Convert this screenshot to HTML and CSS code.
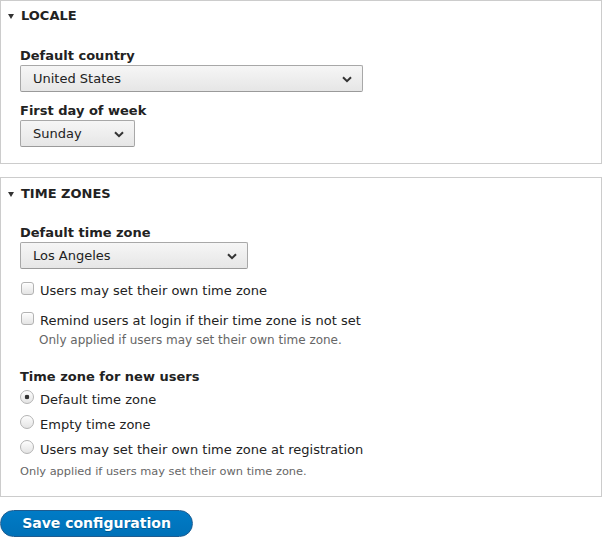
FILE: index.html
```html
<!DOCTYPE html>
<html lang="en">
<head>
<meta charset="utf-8">
<title>Regional settings</title>
<link rel="stylesheet" href="styles.css">
</head>
<body>
<form class="page">
  <section class="box">
    <div class="summary"><span class="marker"></span><span class="summary-text">Locale</span></div>
    <div class="box-body">
      <div class="label">Default country</div>
      <div class="select select--country"><span>United States</span><svg class="chev" width="10" height="7" viewBox="0 0 10 7"><path d="M1 1.2 L5 5.2 L9 1.2" fill="none" stroke="#333" stroke-width="2"/></svg></div>
      <div class="label label--gap">First day of week</div>
      <div class="select select--day"><span>Sunday</span><svg class="chev" width="10" height="7" viewBox="0 0 10 7"><path d="M1 1.2 L5 5.2 L9 1.2" fill="none" stroke="#333" stroke-width="2"/></svg></div>
    </div>
  </section>

  <section class="box box--second">
    <div class="summary summary--low"><span class="marker"></span><span class="summary-text">Time zones</span></div>
    <div class="box-body box-body--tz">
      <div class="label label--tight">Default time zone</div>
      <div class="select select--tz"><span>Los Angeles</span><svg class="chev" width="10" height="7" viewBox="0 0 10 7"><path d="M1 1.2 L5 5.2 L9 1.2" fill="none" stroke="#333" stroke-width="2"/></svg></div>
      <label class="option option--check option--lead"><input type="checkbox" class="check"><span>Users may set their own time zone</span></label>
      <label class="option option--check"><input type="checkbox" class="check"><span>Remind users at login if their time zone is not set</span></label>
      <div class="desc desc--indent">Only applied if users may set their own time zone.</div>
      <div class="label label--group">Time zone for new users</div>
      <label class="option option--radio option--first"><input type="radio" name="tz" class="radio" checked><span>Default time zone</span></label>
      <label class="option option--radio"><input type="radio" name="tz" class="radio"><span>Empty time zone</span></label>
      <label class="option option--radio"><input type="radio" name="tz" class="radio"><span>Users may set their own time zone at registration</span></label>
      <div class="desc desc--small">Only applied if users may set their own time zone.</div>
    </div>
  </section>

  <button type="button" class="button">Save configuration</button>
</form>
</body>
</html>
```

FILE: styles.css
```css
* { box-sizing: border-box; }

html, body {
  margin: 0;
  padding: 0;
  background: #fff;
}

body {
  font-family: "DejaVu Sans", Verdana, sans-serif;
  font-size: 13px;
  line-height: 20px;
  color: #222;
}

.page {
  display: flex;
  flex-direction: column;
  align-items: flex-start;
  width: 602px;
}

.box {
  width: 602px;
  border: 1px solid #ccc;
  padding: 5px 19px 16px 7px;
}

.box--second {
  margin-top: 13px;
  padding-bottom: 17px;
}

.summary {
  display: flex;
  align-items: center;
  height: 20px;
  font-weight: bold;
  text-transform: uppercase;
  color: #222;
}

.summary--low { margin-top: 1px; }

.marker {
  width: 0;
  height: 0;
  border-left: 3px solid transparent;
  border-right: 3px solid transparent;
  border-top: 5px solid #333;
  margin-right: 7px;
  margin-top: 1px;
}

.box-body {
  padding-left: 12px;
  display: flex;
  flex-direction: column;
  align-items: flex-start;
}

.label {
  margin-top: 19px;
  padding-top: 2px;
  height: 20px;
  font-weight: bold;
  line-height: 18px;
}

.label--tight { margin-top: 18px; }
.label--gap { margin-top: 8px; }
.label--group { margin-top: 18px; }

.select {
  height: 27px;
  display: flex;
  align-items: center;
  justify-content: space-between;
  padding: 0 10px 0 12px;
  border: 1px solid #a8a8a8;
  border-bottom-color: #9a9a9a;
  border-radius: 2px;
  background: linear-gradient(#f6f6f6, #e6e6e6);
  color: #222;
}

.select--country { width: 343px; }
.select--day { width: 115px; }
.select--tz { width: 228px; }

.chev { display: block; margin-top: 1px; }

.option {
  display: flex;
  align-items: flex-start;
  line-height: 20px;
  margin-top: 10px;
}

.option--lead { margin-top: 12px; }
.option--radio { margin-top: 5px; }
.option--first { margin-top: 4px; }

.check, .radio {
  -webkit-appearance: none;
  appearance: none;
  margin: 0;
  flex: none;
  border: 1px solid #b3b3b3;
  background: linear-gradient(#fdfdfd, #e4e4e4);
  box-shadow: inset 0 1px 1px rgba(255,255,255,0.8);
}

.check {
  width: 13px;
  height: 13px;
  border-radius: 3px;
  margin: 1px 6px 0 1px;
}

.radio {
  width: 14px;
  height: 14px;
  border-radius: 50%;
  margin: 0 6px 0 0;
}

.radio:checked {
  background: radial-gradient(circle, #333 0, #333 2px, transparent 2.6px), linear-gradient(#fdfdfd, #e4e4e4);
}

.desc {
  color: #666;
  font-size: 12px;
  line-height: 15px;
  margin-top: 2px;
}

.desc--indent { padding-left: 19px; }

.desc--small {
  font-size: 11.375px;
  margin-top: 4px;
}

.button {
  margin-top: 13px;
  width: 193px;
  height: 27px;
  padding: 0 0 2px;
  border: 1px solid #1e5c90;
  border-radius: 20px;
  background: linear-gradient(#007bc6, #0071b8);
  color: #fff;
  font-family: "DejaVu Sans", Verdana, sans-serif;
  font-size: 14px;
  font-weight: bold;
  line-height: 20px;
  text-shadow: 0 1px 0 rgba(0,0,0,0.25);
  text-align: center;
}
```
